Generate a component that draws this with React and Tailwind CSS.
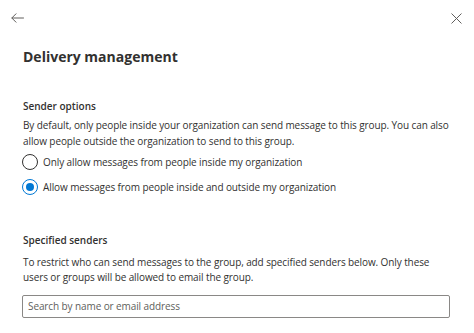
import React from "react";

export default function App() {
  return (
    <div
      className="w-[474px] h-[333px] bg-white overflow-hidden text-[#323130]"
      style={{ fontFamily: '"Open Sans", "Noto Sans", Arial, sans-serif' }}
    >
      <div className="h-[36px] flex items-center justify-between pl-[11px] pr-[12px]">
        <svg width="13" height="10" viewBox="0 0 13 10" fill="none" stroke="#605e5c" strokeWidth="1" strokeLinecap="round" strokeLinejoin="round">
          <path d="M12.5 5H1M5 0.8L0.8 5L5 9.2" />
        </svg>
        <svg width="11" height="11" viewBox="0 0 11 11" fill="none" stroke="#605e5c" strokeWidth="1" strokeLinecap="round">
          <path d="M0.8 0.8L10.2 10.2M10.2 0.8L0.8 10.2" />
        </svg>
      </div>
      <div className="px-[23px]">
        <h1 className="mt-[9px] text-[14px] leading-[24px] font-bold">Delivery management</h1>
        <h2 className="mt-[29px] text-[10px] leading-[16px] font-semibold">Sender options</h2>
        <p className="mt-[3px] text-[10px] tracking-[-0.1px] leading-[16px] text-[#323130]">
          By default, only people inside your organization can send message to this group. You can also allow people outside the organization to send to this group.
        </p>
        <div className="mt-[3px] h-[20px] flex items-center gap-[5px] -ml-[1px]">
          <span className="w-[16px] h-[16px] rounded-full border border-[#323130] bg-white" />
          <span className="text-[10px] tracking-[-0.1px] leading-[16px]">Only allow messages from people inside my organization</span>
        </div>
        <div className="mt-[5px] h-[20px] flex items-center gap-[5px] -ml-[1px]">
          <span className="w-[16px] h-[16px] rounded-full border border-[#0078d4] bg-white flex items-center justify-center">
            <span className="w-[8px] h-[8px] rounded-full bg-[#0078d4]" />
          </span>
          <span className="text-[10px] tracking-[-0.1px] leading-[16px]">Allow messages from people inside and outside my organization</span>
        </div>
        <h2 className="mt-[35px] text-[10px] leading-[16px] font-semibold">Specified senders</h2>
        <p className="mt-[7px] text-[10px] tracking-[-0.1px] leading-[15px] text-[#323130]">
          To restrict who can send messages to the group, add specified senders below. Only these users or groups will be allowed to email the group.
        </p>
        <div className="mt-[10px] -ml-[1px] w-[428px] h-[23px] border border-[#8a8886] rounded-[2px] flex items-center px-[5px]">
          <span className="text-[10px] tracking-[-0.1px] text-[#605e5c]">Search by name or email address</span>
        </div>
      </div>
    </div>
  );
}
